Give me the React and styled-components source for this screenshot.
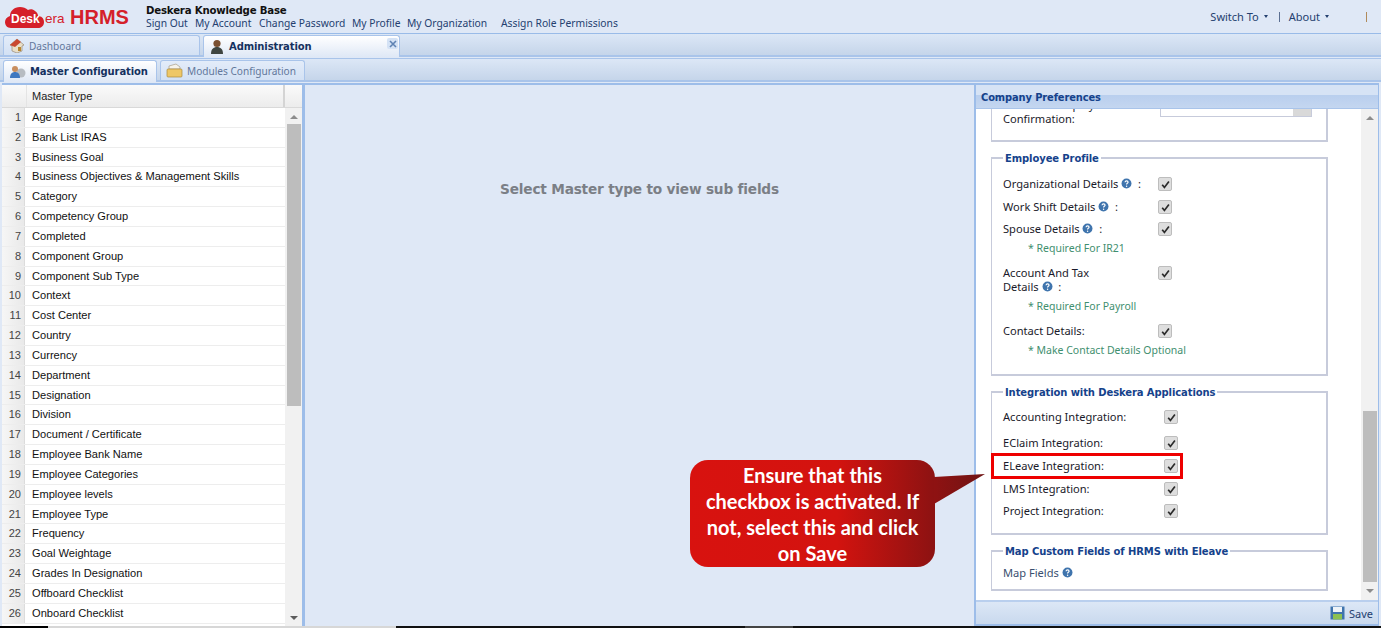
import React from 'react';
import styled, { createGlobalStyle } from 'styled-components';

const masterTypes = [
    "Age Range", "Bank List IRAS", "Business Goal", "Business Objectives & Management Skills",
    "Category", "Competency Group", "Completed", "Component Group", "Component Sub Type",
    "Context", "Cost Center", "Country", "Currency", "Department", "Designation", "Division",
    "Document / Certificate", "Employee Bank Name", "Employee Categories", "Employee levels",
    "Employee Type", "Frequency", "Goal Weightage", "Grades In Designation",
    "Offboard Checklist", "Onboard Checklist",
];

const navLinks = [
    { label: "Sign Out", width: 49 },
    { label: "My Account", width: 64 },
    { label: "Change Password", width: 93 },
    { label: "My Profile", width: 55 },
    { label: "My Organization", width: 94 },
    { label: "Assign Role Permissions", width: 130 },
];

const Help = () => (
    <HelpIcon viewBox="0 0 12 12">
        <circle cx="6" cy="6" r="5.4" fill="#3f74ad" />
        <path d="M4.4 4.7c.1-1 .8-1.5 1.7-1.5s1.6.5 1.6 1.4c0 1.2-1.6 1.2-1.6 2.4" fill="none" stroke="#fff" strokeWidth="1.3" />
        <circle cx="6.1" cy="8.9" r=".8" fill="#fff" />
    </HelpIcon>
);

const Check = () => (
    <CheckBox>
        <svg width="9" height="9" viewBox="0 0 9 9">
            <path d="M1.2 4.8 3.4 7.4 7.9 1.4" fill="none" stroke="#2b2b2b" strokeWidth="1.7" />
        </svg>
    </CheckBox>
);

function App() {
    return (
        <>
            <GlobalStyle />
            <Page>
                <Header>
                    <Logo>
                        <svg width="62" height="26" viewBox="0 0 62 26">
                            <path d="M6 25C2 25 0 22 0 19c0-3 2-5 5-6 0-5 4-9 10-9 3 0 6 1 8 3 2-1 5-1 7 1 2 1 3 3 3 5 3 0 6 2 6 6s-3 6-6 6Z" fill="#d5202a" />
                        </svg>
                        <LogoWord>Desk</LogoWord>
                        <LogoTail>era</LogoTail>
                        <LogoProduct>HRMS</LogoProduct>
                    </Logo>
                    <HeaderLinks>
                        <BaseTitle>Deskera Knowledge Base</BaseTitle>
                        <NavRow>
                            {navLinks.map((link) => (
                                <NavLink key={link.label} $width={link.width}>{link.label}</NavLink>
                            ))}
                        </NavRow>
                    </HeaderLinks>
                    <HeaderRight>
                        <MenuItem>Switch To<Caret /></MenuItem>
                        <Pipe />
                        <MenuItem>About<Caret /></MenuItem>
                        <LastPipe />
                    </HeaderRight>
                </Header>

                <TabStrip>
                    <Tab $width={197}>
                        <svg width="16" height="15" viewBox="0 0 16 15">
                            <path d="M1 7 8 1l7 6-2 1v5l-5 2-5-2V8Z" fill="#e9dfc8" stroke="#8a7b66" strokeWidth=".6" />
                            <path d="M1 7 8 1l4 3-6 5Z" fill="#c9482f" />
                            <rect x="9" y="9" width="3" height="4" fill="#b8862f" />
                        </svg>
                        <TabLabel>Dashboard</TabLabel>
                    </Tab>
                    <Tab $active $width={197}>
                        <svg width="16" height="16" viewBox="0 0 16 16">
                            <circle cx="8" cy="4.5" r="3.6" fill="#7a4f30" />
                            <path d="M2 15c0-5 2.500-7 6-7s6 2 6 7Z" fill="#3f4540" />
                        </svg>
                        <ActiveLabel>Administration</ActiveLabel>
                        <CloseIcon>
                            <svg width="8" height="8" viewBox="0 0 8 8">
                                <path d="M1 1l6 6M7 1 1 7" stroke="#5f83b3" strokeWidth="1.6" />
                            </svg>
                        </CloseIcon>
                    </Tab>
                </TabStrip>

                <SubTabStrip>
                    <Tab $active $width={154}>
                        <svg width="17" height="14" viewBox="0 0 17 14">
                            <circle cx="12" cy="8" r="4.500" fill="#b7bcc2" />
                            <circle cx="6" cy="4" r="3" fill="#c98f5f" />
                            <path d="M1 13c0-4 2-6 5-6s5 2 5 6Z" fill="#3f78c0" />
                        </svg>
                        <ActiveLabel>Master Configuration</ActiveLabel>
                    </Tab>
                    <Tab $width={145}>
                        <svg width="17" height="15" viewBox="0 0 17 15">
                            <path d="M3 6V3l7-2 4 3v2Z" fill="#f6f3ea" stroke="#9a8f74" strokeWidth=".6" />
                            <rect x="1" y="6" width="15" height="8" rx="1" fill="#eec766" stroke="#a98a3c" strokeWidth=".7" />
                        </svg>
                        <TabLabel>Modules Configuration</TabLabel>
                    </Tab>
                </SubTabStrip>

                <Workspace>
                    <GridPanel>
                        <GridHead>
                            <HeadCorner />
                            <HeadCell>Master Type</HeadCell>
                            <HeadEnd />
                        </GridHead>
                        <GridBody>
                            <Rows>
                                {masterTypes.map((name, i) => (
                                    <Row key={name}>
                                        <RowNumber>{i + 1}</RowNumber>
                                        <RowName>{name}</RowName>
                                    </Row>
                                ))}
                            </Rows>
                            <GridScroll>
                                <ArrowUp />
                                <GridThumb />
                                <ArrowDown />
                            </GridScroll>
                        </GridBody>
                    </GridPanel>

                    <CenterPanel>Select Master type to view sub fields</CenterPanel>

                    <PrefsPanel>
                        <PrefsTitle>Company Preferences</PrefsTitle>
                        <PrefsBody>
                            <PrefsContent>
                                <ClippedField>
                                    <AlertRow>
                                        <FieldLabel>Alerts For Employee<br />Confirmation:</FieldLabel>
                                        <ComboBox><ComboButton /></ComboBox>
                                    </AlertRow>
                                </ClippedField>

                                <Field $height={219}>
                                    <Legend>Employee Profile</Legend>
                                    <FormRow $top={18}><FieldLabel>Organizational Details <Help /> &nbsp;:</FieldLabel><Check /></FormRow>
                                    <FormRow $top={9}><FieldLabel>Work Shift Details <Help /> &nbsp;:</FieldLabel><Check /></FormRow>
                                    <FormRow $top={8}><FieldLabel>Spouse Details <Help /> &nbsp;:</FieldLabel><Check /></FormRow>
                                    <Note>* Required For IR21</Note>
                                    <FormRow $top={11}><FieldLabel>Account And Tax<br />Details <Help /> &nbsp;:</FieldLabel><Check /></FormRow>
                                    <Note>* Required For Payroll</Note>
                                    <FormRow $top={11}><FieldLabel>Contact Details:</FieldLabel><Check /></FormRow>
                                    <Note>* Make Contact Details Optional</Note>
                                </Field>

                                <Field $height={144}>
                                    <Legend>Integration with Deskera Applications</Legend>
                                    <FormRow $top={17} $wide><FieldLabel>Accounting Integration:</FieldLabel><Check /></FormRow>
                                    <FormRow $top={12} $wide><FieldLabel>EClaim Integration:</FieldLabel><Check /></FormRow>
                                    <FormRow $top={9} $wide><FieldLabel>ELeave Integration:</FieldLabel><Check /></FormRow>
                                    <FormRow $top={9} $wide><FieldLabel>LMS Integration:</FieldLabel><Check /></FormRow>
                                    <FormRow $top={8} $wide><FieldLabel>Project Integration:</FieldLabel><Check /></FormRow>
                                </Field>

                                <Field $height={41}>
                                    <Legend>Map Custom Fields of HRMS with Eleave</Legend>
                                    <FormRow $top={14}><MapLabel>Map Fields <Help /></MapLabel></FormRow>
                                </Field>
                            </PrefsContent>
                            <PrefsScroll>
                                <ArrowUp />
                                <PrefsThumb />
                                <PrefsArrowDown />
                            </PrefsScroll>
                        </PrefsBody>
                        <PrefsFooter>
                            <svg width="15" height="14" viewBox="0 0 15 14">
                                <rect x=".5" y=".5" width="14" height="13" fill="#3f74ad" />
                                <rect x="3" y="1" width="9" height="5" fill="#eef3f8" />
                                <rect x="3" y="8" width="9" height="5.500" fill="#8cc152" />
                            </svg>
                            <SaveLabel>Save</SaveLabel>
                        </PrefsFooter>
                    </PrefsPanel>
                </Workspace>

                <BottomEdge>
                    <EdgePart $width={48} $color="#000" />
                    <EdgePart $width={348} $color="#d7d7d7" />
                    <EdgePart $width={349} $color="#111" />
                    <EdgePart $width={48} $color="#444" />
                    <EdgePart $width={588} $color="#111" />
                </BottomEdge>

                <Highlight />
                <Callout>
                    <CalloutTail width="56" height="36" viewBox="0 0 56 36">
                        <defs>
                            <linearGradient id="tail" x1="0" x2="1">
                                <stop offset="0" stopColor="#8f1212" />
                                <stop offset="1" stopColor="#6f1414" />
                            </linearGradient>
                        </defs>
                        <path d="M0 3 51 0 0 30Z" fill="url(#tail)" />
                    </CalloutTail>
                    Ensure that this checkbox is activated. If not, select this and click on Save
                </Callout>
            </Page>
        </>
    );
}

const GlobalStyle = createGlobalStyle`
    body {
        margin: 0;
        background: #dfe8f6;
        font-family: "Noto Sans", sans-serif;
    }
`

const Page = styled.div`
    position: relative;
    width: 1381px;
    height: 628px;
    overflow: hidden;
    display: flex;
    flex-direction: column;
    background: #dfe8f6;
`

const Header = styled.div`
    height: 33px;
    flex: none;
    display: flex;
    background: #dfe8f6;
    border-bottom: 1px solid #99bbe8;
`

const Logo = styled.div`
    position: relative;
    width: 146px;
    flex: none;

    svg {
        position: absolute;
        left: 5px;
        top: 3px;
    }
`

const LogoWord = styled.span`
    position: absolute;
    left: 11px;
    top: 12px;
    font: bold 12px "Liberation Sans", sans-serif;
    color: #fff;
`

const LogoTail = styled.span`
    position: absolute;
    left: 45px;
    top: 11px;
    font: 13.500px "Liberation Sans", sans-serif;
    color: #d5202a;
`

const LogoProduct = styled.span`
    position: absolute;
    left: 70px;
    top: 6px;
    font: bold 20px "Liberation Sans", sans-serif;
    color: #d5202a;
`

const HeaderLinks = styled.div`
    padding-top: 5px;
    flex: 1;
`

const BaseTitle = styled.div`
    font: bold 10.200px/12px "DejaVu Sans", sans-serif;
    color: #111;
    letter-spacing: -0.2px;
`

const NavRow = styled.div`
    display: flex;
`

const NavLink = styled.span`
    width: ${(props) => props.$width}px;
    flex: none;
    font-size: 10.300px;
    line-height: 12px;
    color: #24406f;
    white-space: nowrap;
`

const HeaderRight = styled.div`
    display: flex;
    align-items: center;
    height: 33px;
    padding-right: 14px;
    font-size: 11px;
    color: #24406f;
`

const MenuItem = styled.span`
    display: flex;
    align-items: center;
    white-space: nowrap;
`

const Caret = styled.i`
    margin-left: 5px;
    border: 2.500px solid transparent;
    border-top: 3px solid #24406f;
    border-bottom: 0;
`

const Pipe = styled.i`
    width: 1px;
    height: 10px;
    margin: 0 9px 0 11px;
    background: #5b6f92;
`

const LastPipe = styled.i`
    width: 1px;
    height: 10px;
    margin-left: 37px;
    background: #b08a5a;
`

const TabStrip = styled.div`
    height: 23px;
    flex: none;
    display: flex;
    align-items: flex-end;
    gap: 3px;
    padding-left: 3px;
    box-sizing: border-box;
    background: linear-gradient(#dce7f6, #c5d5ea);
    border-bottom: 2px solid #a9c4ea;
`

const SubTabStrip = styled(TabStrip)`
    margin-top: 1px;
    height: 24px;
    border-top: 1px solid #a9c4ea;
`

const Tab = styled.div`
    position: relative;
    width: ${(props) => props.$width}px;
    height: ${(props) => (props.$active ? 22 : 20)}px;
    margin-bottom: ${(props) => (props.$active ? -2 : 0)}px;
    box-sizing: border-box;
    display: flex;
    align-items: center;
    gap: 4px;
    padding-left: 5px;
    border: 1px solid #a9c4ea;
    border-bottom: 0;
    border-radius: 3px 3px 0 0;
    background: ${(props) => (props.$active ? "linear-gradient(#fff, #dfe8f6)" : "linear-gradient(#e3ecf9, #d3e1f4)")};
`

const TabLabel = styled.span`
    font-size: 10.100px;
    color: #62779b;
    white-space: nowrap;
`

const ActiveLabel = styled.span`
    font: bold 10px "DejaVu Sans", sans-serif;
    color: #15315f;
    letter-spacing: -0.1px;
    white-space: nowrap;
`

const CloseIcon = styled.span`
    position: absolute;
    right: 1px;
    top: 2px;
    width: 11px;
    height: 11px;
    display: flex;
    align-items: center;
    justify-content: center;
    background: #d4e2f5;
    border-radius: 2px;
`

const Workspace = styled.div`
    flex: 1;
    min-height: 0;
    display: flex;
    padding: 1px 2px 0;
    background: #dfe8f6;
`

const GridPanel = styled.div`
    width: 303px;
    flex: none;
    box-sizing: border-box;
    display: flex;
    flex-direction: column;
    background: #fff;
    border-right: 3px solid #9dbde9;
    border-top: 2px solid #9dbde9;
`

const GridHead = styled.div`
    height: 22px;
    flex: none;
    display: flex;
    background: linear-gradient(#fafafa, #ececec);
    border-bottom: 1px solid #d9d9d9;
`

const HeadCorner = styled.div`
    width: 24px;
    border-right: 1px solid #e4e4e4;
`

const HeadCell = styled.div`
    flex: 1;
    padding-left: 5px;
    font: 11px/22px "Liberation Sans", sans-serif;
    color: #222;
    border-right: 2px solid #d4d4d4;
`

const HeadEnd = styled.div`
    width: 17px;
`

const GridBody = styled.div`
    flex: 1;
    min-height: 0;
    display: flex;
`

const Rows = styled.div`
    flex: 1;
    min-width: 0;
`

const Row = styled.div`
    height: 19.840px;
    box-sizing: border-box;
    display: flex;
    border-bottom: 1px solid #ededed;
`

const RowNumber = styled.div`
    width: 23px;
    padding-right: 3px;
    box-sizing: border-box;
    text-align: right;
    font: 11px/19px "Liberation Sans", sans-serif;
    color: #444;
    background: linear-gradient(90deg, #f6f6f6, #e9e9e9);
    border-right: 1px solid #dcdcdc;
`

const RowName = styled.div`
    flex: 1;
    padding-left: 7px;
    font: 11.100px/19px "Liberation Sans", sans-serif;
    color: #111;
    white-space: nowrap;
`

const GridScroll = styled.div`
    width: 17px;
    flex: none;
    display: flex;
    flex-direction: column;
    align-items: center;
    background: #f1f1f1;
`

const ArrowUp = styled.i`
    margin-top: 7px;
    border: 4px solid transparent;
    border-bottom: 4px solid #8c8c8c;
    border-top: 0;
`

const ArrowDown = styled.i`
    margin-top: auto;
    margin-bottom: 6px;
    border: 4px solid transparent;
    border-top: 4px solid #5c5c5c;
    border-bottom: 0;
`

const PrefsArrowDown = styled(ArrowDown)`
    margin-top: 7px;
    margin-bottom: 7px;
    border-top-color: #8c8c8c;
`

const GridThumb = styled.div`
    width: 14px;
    height: 282px;
    margin-top: 5px;
    background: #bdbdbd;
`

const CenterPanel = styled.div`
    width: 669px;
    flex: none;
    box-sizing: border-box;
    padding-top: 96px;
    text-align: center;
    font: bold 13.700px "DejaVu Sans", sans-serif;
    letter-spacing: -0.2px;
    color: #7b7f86;
    background: #dfe8f6;
    border-top: 2px solid #9dbde9;
`

const PrefsPanel = styled.div`
    width: 405px;
    flex: none;
    box-sizing: border-box;
    display: flex;
    flex-direction: column;
    border: 2px solid #9dbde9;
    border-right: 1px solid #9dbde9;
    background: #fff;
`

const PrefsTitle = styled.div`
    height: 23px;
    flex: none;
    padding-left: 5px;
    font: bold 9.900px/26px "DejaVu Sans", sans-serif;
    letter-spacing: -0.1px;
    color: #15428b;
    background: linear-gradient(#d6e3f5 0, #d6e3f5 45%, #b9cfee 45%, #c4d6f0 100%);
    border-bottom: 1px solid #a9c4ea;
`

const PrefsBody = styled.div`
    flex: 1;
    min-height: 0;
    display: flex;
`

const PrefsContent = styled.div`
    flex: 1;
    min-width: 0;
    overflow: hidden;
    padding: 0 33px 0 15px;
`

const Field = styled.div`
    position: relative;
    height: ${(props) => props.$height}px;
    margin-top: 15px;
    box-sizing: border-box;
    border: 1px solid #c7cbdb;
    border-width: 2px 2px 2px 1px;
    padding: 0 11px;
`

const ClippedField = styled(Field)`
    height: 44px;
    margin-top: 0;
    border-top: 0;
`

const AlertRow = styled.div`
    display: flex;
    margin-top: -11px;
    height: 30px;
    justify-content: space-between;
    padding-right: 3px;
`

const ComboBox = styled.div`
    width: 150px;
    height: 7px;
    margin-top: 11px;
    display: flex;
    justify-content: flex-end;
    border: 1px solid #c7cbdb;
    border-top: 0;
`

const ComboButton = styled.div`
    width: 18px;
    background: #d9d9d9;
`

const Legend = styled.div`
    position: absolute;
    left: 11px;
    top: -7px;
    padding: 0 2px;
    background: #fff;
    font: bold 10px/14px "DejaVu Sans", sans-serif;
    letter-spacing: -0.1px;
    color: #15428b;
    white-space: nowrap;
`

const FormRow = styled.div`
    display: grid;
    grid-template-columns: ${(props) => (props.$wide ? "161px" : "155px")} auto;
    margin-top: ${(props) => props.$top}px;
`

const FieldLabel = styled.div`
    font-size: 11.100px;
    line-height: 14px;
    color: #1a1a2a;
    white-space: nowrap;
`

const MapLabel = styled(FieldLabel)`
    color: #3a4f6f;
`

const HelpIcon = styled.svg`
    width: 11px;
    height: 11px;
    vertical-align: -1px;
`

const CheckBox = styled.span`
    width: 12px;
    height: 12px;
    display: flex;
    align-items: center;
    justify-content: center;
    border-radius: 2px;
    border: 1px solid #bdbdbd;
    background: #dedede;
`

const Note = styled.div`
    margin: 5px 0 0 25px;
    font-size: 10.500px;
    line-height: 14px;
    color: #3f8f6f;
`

const PrefsScroll = styled.div`
    width: 17px;
    flex: none;
    display: flex;
    flex-direction: column;
    align-items: center;
    background: #f1f1f1;
`

const PrefsThumb = styled.div`
    width: 14px;
    height: 171px;
    margin-top: auto;
    background: #bdbdbd;
`

const PrefsFooter = styled.div`
    height: 22px;
    flex: none;
    display: flex;
    align-items: center;
    justify-content: flex-end;
    gap: 4px;
    padding-right: 5px;
    background: linear-gradient(#dce7f6, #c9d9ee);
    border-top: 2px solid #b9cfee;
`

const SaveLabel = styled.span`
    font-size: 11px;
    color: #24406f;
`

const BottomEdge = styled.div`
    height: 2px;
    flex: none;
    display: flex;
`

const EdgePart = styled.i`
    width: ${(props) => props.$width}px;
    background: ${(props) => props.$color};
`

const Highlight = styled.div`
    position: absolute;
    left: 991px;
    top: 453px;
    width: 192px;
    height: 26px;
    box-sizing: border-box;
    border: 3px solid #ee0000;
`

const Callout = styled.div`
    position: absolute;
    left: 690px;
    top: 460px;
    width: 245px;
    height: 107px;
    box-sizing: border-box;
    padding: 0 12px;
    display: flex;
    align-items: center;
    text-align: center;
    border-radius: 18px;
    background: linear-gradient(90deg, #d8120f 0%, #d3130f 60%, #8c1212 100%);
    color: #fff;
    font: bold 20px/26px Lato, sans-serif;
`

const CalloutTail = styled.svg`
    position: absolute;
    left: 244px;
    top: 14px;
`

export default App;
